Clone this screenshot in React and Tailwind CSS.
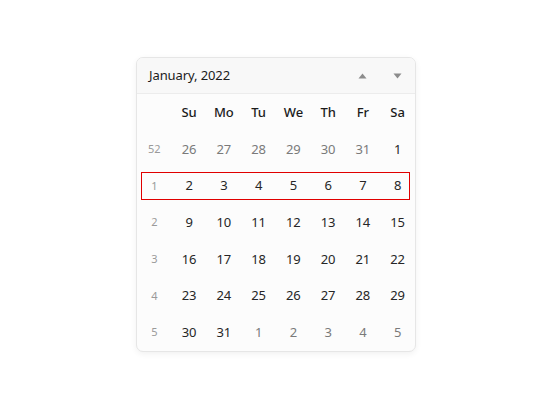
export default function App() {
  const days = ["Su", "Mo", "Tu", "We", "Th", "Fr", "Sa"];
  const weeks = [
    { n: 52, d: [[26, 1], [27, 1], [28, 1], [29, 1], [30, 1], [31, 1], [1, 0]] },
    { n: 1, d: [[2, 0], [3, 0], [4, 0], [5, 0], [6, 0], [7, 0], [8, 0]], sel: true },
    { n: 2, d: [[9, 0], [10, 0], [11, 0], [12, 0], [13, 0], [14, 0], [15, 0]] },
    { n: 3, d: [[16, 0], [17, 0], [18, 0], [19, 0], [20, 0], [21, 0], [22, 0]] },
    { n: 4, d: [[23, 0], [24, 0], [25, 0], [26, 0], [27, 0], [28, 0], [29, 0]] },
    { n: 5, d: [[30, 0], [31, 0], [1, 1], [2, 1], [3, 1], [4, 1], [5, 1]] },
  ];
  return (
    <div
      className="w-full h-[408px] flex items-center justify-center bg-white pt-[1px]"
      style={{ fontFamily: '"Noto Sans", "Open Sans", sans-serif' }}
    >
      <div className="w-[280px] h-[295px] border border-[#e6e6e6] rounded-[7px] bg-[#fcfcfc] shadow-[0_2px_6px_rgba(0,0,0,0.06)] overflow-hidden flex flex-col">
        <div className="h-[36px] shrink-0 bg-[#f8f8f8] border-b border-[#ececec] flex items-center">
          <div className="flex-1 pl-[12px] text-[13px] font-normal text-[#1b1b1b] tracking-[-0.1px]">
            January, 2022
          </div>
          <div className="w-[35px] h-full flex items-center justify-center">
            <svg width="9" height="6" viewBox="0 0 9 6">
              <path d="M4.5 0.5 L8.5 5.5 L0.5 5.5 Z" fill="#8c8c8c" />
            </svg>
          </div>
          <div className="w-[35px] h-full flex items-center justify-center pr-[1px]">
            <svg width="9" height="6" viewBox="0 0 9 6">
              <path d="M0.5 0.5 L8.5 0.5 L4.5 5.5 Z" fill="#8c8c8c" />
            </svg>
          </div>
        </div>
        <div className="flex-1 flex flex-col">
          <div className="h-[37px] grid grid-cols-8 items-center">
            <div />
            {days.map((d) => (
              <div key={d} className="text-center text-[13px] font-medium text-[#1b1b1b]">
                {d}
              </div>
            ))}
          </div>
          {weeks.map((w) => (
            <div key={w.n} className="relative flex-1 grid grid-cols-8 items-center">
              {w.sel && (
                <div className="absolute left-[4px] right-[5px] top-[4px] bottom-[4px] border border-[#e00000]" />
              )}
              <div className="text-center text-[11px] text-[#9a9a9a]">{w.n}</div>
              {w.d.map(([v, o], i) => (
                <div
                  key={i}
                  className={
                    "text-center text-[13px] " + (o ? "text-[#7a7a7a]" : "text-[#262626]")
                  }
                >
                  {v}
                </div>
              ))}
            </div>
          ))}
        </div>
      </div>
    </div>
  );
}
